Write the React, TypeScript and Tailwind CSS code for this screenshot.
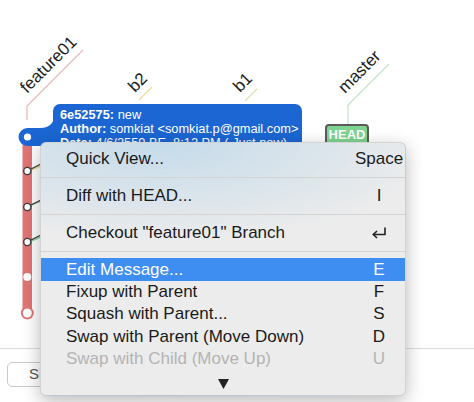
import React from 'react';

type MenuRow =
  | { kind: 'item'; label: string; key?: React.ReactNode; h: string; active?: boolean; disabled?: boolean }
  | { kind: 'sep' };

const ReturnKey: React.FC = () => (
  <svg width="16" height="12" viewBox="0 0 16 12" className="inline-block">
    <path d="M14 0.5 V7.5 H2.5" fill="none" stroke="#222" strokeWidth="1.6" />
    <path d="M6 4 L2.3 7.5 L6 11" fill="none" stroke="#222" strokeWidth="1.6" />
  </svg>
);

const rows: MenuRow[] = [
  { kind: 'item', label: 'Quick View...', key: 'Space', h: 'h-6' },
  { kind: 'sep' },
  { kind: 'item', label: 'Diff with HEAD...', key: 'I', h: 'h-6' },
  { kind: 'sep' },
  { kind: 'item', label: 'Checkout "feature01" Branch', key: <ReturnKey />, h: 'h-6' },
  { kind: 'sep' },
  { kind: 'item', label: 'Edit Message...', key: 'E', h: 'h-[23px]', active: true },
  { kind: 'item', label: 'Fixup with Parent', key: 'F', h: 'h-[22px]' },
  { kind: 'item', label: 'Squash with Parent...', key: 'S', h: 'h-[22px]' },
  { kind: 'item', label: 'Swap with Parent (Move Down)', key: 'D', h: 'h-[23px]' },
  { kind: 'item', label: 'Swap with Child (Move Up)', key: 'U', h: 'h-[22px]', disabled: true },
];

const ContextMenu: React.FC = () => (
  <div className="absolute left-[40px] top-[142px] w-[366px] h-[254px] rounded-[6px] border border-black/10 bg-[#ececec] bg-[radial-gradient(ellipse_280px_100px_at_120px_0px,rgba(190,216,234,0.85),rgba(236,236,236,0))] shadow-[0_5px_18px_rgba(0,0,0,0.28)] text-[17px] text-[#1a1a1a] overflow-hidden">
    <div className="pt-1 flex flex-col">
      {rows.map((r, i) =>
        r.kind === 'sep' ? (
          <div key={i} className="h-[13px] flex items-center">
            <div className="h-px w-full bg-[#d4d4d4]" />
          </div>
        ) : (
          <div
            key={i}
            className={`${r.h} flex items-center justify-between pl-[25px] pr-0 ${
              r.active ? 'bg-[#3e8ef1] text-white' : ''
            } ${r.disabled ? 'text-[#b4b4b4]' : ''}`}
          >
            <span className="whitespace-nowrap">{r.label}</span>
            <span className="w-[52px] text-center flex justify-center">{r.key}</span>
          </div>
        )
      )}
      <div className="h-[27px] flex items-center justify-center">
        <svg width="11" height="10" viewBox="0 0 11 10">
          <polygon points="0,0 11,0 5.5,10" fill="#222" />
        </svg>
      </div>
    </div>
  </div>
);

const BranchLabel: React.FC<{ text: string; left: number; top: number }> = ({ text, left, top }) => (
  <div
    className="absolute h-[17px] leading-[17px] text-[17px] text-[#1c1c1c] whitespace-nowrap origin-bottom-left -rotate-45"
    style={{ left, top }}
  >
    {text}
  </div>
);

const Graph: React.FC = () => (
  <div className="relative h-[349px] border-b border-[#dcdcdc]">
    <svg className="absolute inset-0" width="474" height="348">
      {/* branch pointers */}
      <polyline points="83,50 27,106 27,120" fill="none" stroke="#e8b9b9" strokeWidth="1.2" />
      <line x1="152" y1="87" x2="139" y2="100" stroke="#e9da97" strokeWidth="1.2" />
      <line x1="257" y1="89" x2="245" y2="101" stroke="#dde5ad" strokeWidth="1.2" />
      <polyline points="389,64 348,105 348,124" fill="none" stroke="#bfe3cb" strokeWidth="1.2" />

      {/* rail */}
      <rect x="22.5" y="140" width="9.5" height="173" fill="#e07474" />
      <line x1="31" y1="170" x2="41" y2="166" stroke="#e9d98e" strokeWidth="1.5" />
      <line x1="31" y1="205" x2="41" y2="201" stroke="#8fd39d" strokeWidth="1.5" />
      <line x1="31" y1="241" x2="41" y2="237" stroke="#8fd39d" strokeWidth="1.5" />
      <line x1="27" y1="171" x2="41" y2="164" stroke="#3d3d3d" strokeWidth="1.3" />
      <line x1="27" y1="207" x2="41" y2="200" stroke="#3d3d3d" strokeWidth="1.3" />
      <line x1="27" y1="242" x2="41" y2="235" stroke="#3d3d3d" strokeWidth="1.3" />
      <circle cx="27.3" cy="171" r="3.6" fill="#fff" stroke="#3d3d3d" strokeWidth="1.4" />
      <circle cx="27.3" cy="207" r="3.6" fill="#fff" stroke="#3d3d3d" strokeWidth="1.4" />
      <circle cx="27.3" cy="242" r="3.6" fill="#fff" stroke="#3d3d3d" strokeWidth="1.4" />
      <circle cx="27.3" cy="277" r="4" fill="#fff" />
      <circle cx="27.3" cy="313" r="5.5" fill="#fff" stroke="#e07474" strokeWidth="2" />

      {/* tooltip tab */}
      <path d="M56,110 Q55,128 40,128 L27.5,128 A9,9 0 0 0 27.5,146 L56,146 Z" fill="#1b66d3" />
      <circle cx="27.5" cy="137" r="3.6" fill="#fff" />
    </svg>

    <BranchLabel text="feature01" left={29} top={79} />
    <BranchLabel text="b2" left={137} top={78} />
    <BranchLabel text="b1" left={242} top={78} />
    <BranchLabel text="master" left={347} top={79} />

    {/* commit tooltip */}
    <div className="absolute left-[53px] top-[104px] w-[249px] h-[48px] rounded-t-[7px] bg-[#1b66d3] pl-[7px] pt-1 text-[12.8px] leading-[14px] text-white whitespace-nowrap">
      <div>
        <span className="font-bold">6e52575:</span> new
      </div>
      <div>
        <span className="font-bold">Author:</span> somkiat &lt;somkiat.p@gmail.com&gt;
      </div>
      <div>
        <span className="font-bold">Date:</span> 4/6/2559 BE, 8:12 PM ( Just now)
      </div>
    </div>

    {/* HEAD badge */}
    <div className="absolute left-[325px] top-[124px] w-[44px] h-[24px] rounded-[4px] border-2 border-[#5b5b5b] bg-[#7ed490] text-white text-[13px] font-bold leading-[18px] text-center">
      HEAD
    </div>
  </div>
);

export default function App() {
  return (
    <div className="relative w-[474px] h-[402px] overflow-hidden bg-white font-['Liberation_Sans',Arial,sans-serif]">
      <Graph />
      <div className="px-[7px] pt-[13px]">
        <button className="h-[25px] w-[90px] rounded-[5px] border border-[#c9c9c9] bg-white pl-[21px] text-left text-[15px] text-[#555]">
          Show
        </button>
      </div>
      <ContextMenu />
    </div>
  );
}
